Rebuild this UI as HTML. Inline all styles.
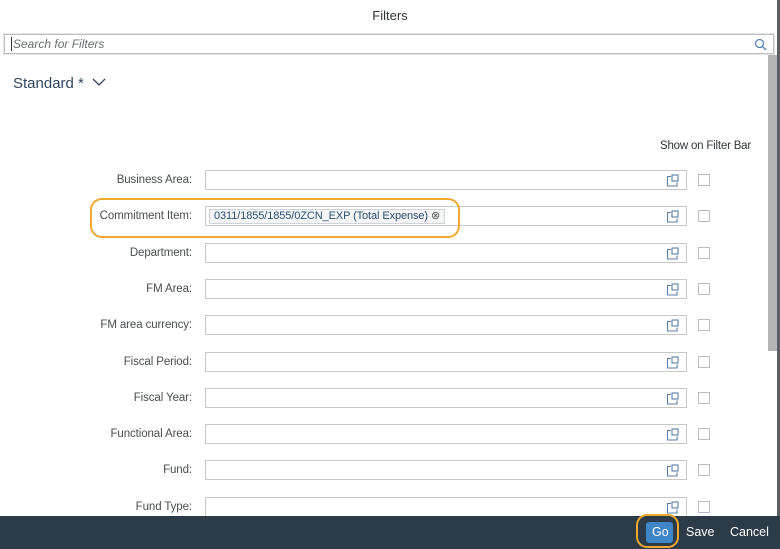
<!DOCTYPE html>
<html><head><meta charset="utf-8"><style>
*{box-sizing:border-box;margin:0;padding:0}
body{width:780px;height:549px;overflow:hidden;background:#fff;font-family:"Liberation Sans",sans-serif;position:relative}
.abs{position:absolute}
.title{left:0;width:780px;top:8px;text-align:center;font-size:13px;color:#32363a}
.search{left:4px;top:34px;width:770px;height:20px;border:1px solid #bfbfbf;box-shadow:0 0 0 1px #e5e5e5}
.search span{position:absolute;left:6px;top:2px;font-style:italic;font-size:12px;color:#6a6d70;border-left:1px solid #333;padding-left:1px}
.std{left:13px;top:75px;font-size:15px;color:#32475e}
.sob{left:660px;top:140px;font-size:11.5px;color:#32363a;letter-spacing:-0.2px}
.lbl{width:192px;left:0;text-align:right;font-size:11.5px;color:#4a4d50;letter-spacing:-0.1px}
.inp{left:205px;width:482px;height:20px;border:1px solid #c8c8c8;background:#fff}
.vh{right:6px;top:3px}
.cb{left:698px;width:12px;height:12px;border:1px solid #bdbdbd;background:#fff}
.scroll{left:768px;top:55px;width:9px;height:296px;background:#b4b4b4}
.edge{left:777px;top:0;width:3px;height:549px;background:#5a5f66}
.foot{left:0;top:516px;width:780px;height:33px;background:#2d3b48}
.foot span{position:absolute;top:9px;font-size:12.5px;color:#fff}
</style></head><body>
<div class="abs title">Filters</div>
<div class="abs search"><span>Search for Filters</span>
<svg class="abs" style="right:6px;top:3px" width="13" height="13" viewBox="0 0 13 13"><circle cx="5.5" cy="5.5" r="4" fill="none" stroke="#4b7fb5" stroke-width="1.2"/><path d="M8.5 8.5L12 12" stroke="#4b7fb5" stroke-width="1.3"/></svg></div>
<div class="abs std">Standard *<svg style="margin-left:8px;vertical-align:1px" width="14" height="9" viewBox="0 0 14 9"><path d="M1 1L7 7L13 1" fill="none" stroke="#32475e" stroke-width="1.3"/></svg></div>
<div class="abs sob">Show on Filter Bar</div>
<div class="abs scroll"></div>
<div class="abs edge"></div>

<div id="rows"></div>
<script>
var L=["Business Area:","Commitment Item:","Department:","FM Area:","FM area currency:","Fiscal Period:","Fiscal Year:","Functional Area:","Fund:","Fund Type:"];
var h="";
for(var i=0;i<L.length;i++){var t=170+i*36.3;
h+='<div class="abs lbl" style="top:'+(t+4)+'px">'+L[i]+'</div>';
h+='<div class="abs inp" style="top:'+t+'px">'+(i==1?'<div class="abs" style="left:3px;top:2px;height:15px;padding:0 4px;border:1px solid #d0d4d8;background:#f3f5f7;font-size:11px;color:#2c4e72;line-height:13px;letter-spacing:-0.1px">0311/1855/1855/0ZCN_EXP (Total Expense) <span style="font-size:11px;color:#555">&#x2297;</span></div>':'')+'<svg class="abs vh" width="14" height="13" viewBox="0 0 14 13"><path d="M5 2.5H1.5V12H11V8.5" fill="none" stroke="#5a7fa8" stroke-width="1.1"/><rect x="6" y="1" width="6" height="6" fill="none" stroke="#5a7fa8" stroke-width="1.1"/></svg></div>';
h+='<div class="abs cb" style="top:'+(t+4)+'px"></div>';}
document.getElementById("rows").innerHTML=h;
</script>
<div class="abs" style="left:90px;top:198px;width:370px;height:40px;border:2px solid #f0a830;border-radius:12px"></div>
<div class="abs foot">
<div class="abs" style="left:646px;top:6px;width:27px;height:21px;background:#3f86c8;border-radius:3px"></div>
<span style="left:652px">Go</span>
<span style="left:686px">Save</span>
<span style="left:730px">Cancel</span>
</div>
<div class="abs" style="left:636px;top:514px;width:43px;height:34px;border:2px solid #f0a830;border-radius:11px"></div>
</body></html>
